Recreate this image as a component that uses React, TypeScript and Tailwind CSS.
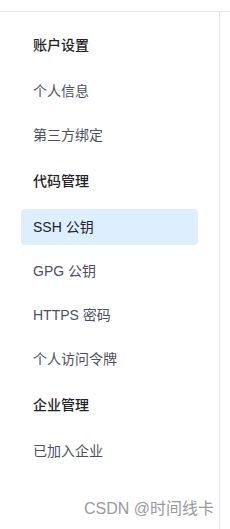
const groups = [
  { title: "账户设置", items: ["个人信息", "第三方绑定"] },
  { title: "代码管理", items: ["SSH 公钥", "GPG 公钥", "HTTPS 密码", "个人访问令牌"] },
  { title: "企业管理", items: ["已加入企业"] },
];

const active = "SSH 公钥";

export default function App() {
  return (
    <div
      className="relative h-[529px] w-[230px] overflow-hidden bg-white"
      style={{ fontFamily: '"Liberation Sans", "Noto Sans CJK SC", sans-serif' }}
    >
      <div className="mt-[11px] h-[518px] border-t border-[#e5e6e8]">
        <nav className="flex h-full w-[220px] flex-col gap-2 border-r border-[#e5e6e8] px-[21px] pt-[13px]">
          {groups.map((g) => (
            <div key={g.title} className="flex flex-col gap-2">
              <div className="flex h-10 items-center px-3 text-[14px] font-medium text-[#1f2328]">
                {g.title}
              </div>
              {g.items.map((item) => (
                <div
                  key={item}
                  className={
                    item === active
                      ? "flex h-9 items-center rounded-[4px] bg-[#ddeffe] px-3 text-[14px] text-[#1f2328]"
                      : "flex h-9 items-center rounded-[4px] px-3 text-[14px] text-[#4c5160]"
                  }
                >
                  {item}
                </div>
              ))}
            </div>
          ))}
        </nav>
      </div>
      <div className="absolute bottom-[8px] right-[16px] text-[16px] text-[#9a9a9a]">
        CSDN @时间线卡
      </div>
    </div>
  );
}
